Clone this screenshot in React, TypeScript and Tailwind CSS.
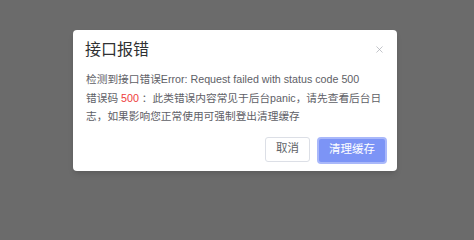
import { X } from "lucide-react";

const font = { fontFamily: '"Liberation Sans", "Noto Sans CJK SC", sans-serif' };

export default function App() {
  return (
    <div className="min-h-screen w-full bg-[#6b6b6b] pl-[73px] pt-[30px]" style={font}>
      {/* Dialog */}
      <div className="w-[324px] rounded-[4px] bg-white px-[13px] pb-[7px] shadow-md">
        {/* Header */}
        <div className="flex items-center justify-between pt-[10px]">
          <h2 className="-ml-[1px] text-[16px] leading-[19px] text-[#303133]">接口报错</h2>
          <button className="-mr-[1px] text-[#a8abb2]">
            <X className="h-[11px] w-[11px]" strokeWidth={1.5} />
          </button>
        </div>

        {/* Body */}
        <div className="mt-[11px] text-[10.7px] leading-[18.5px] text-[#5e6066]">
          <p>检测到接口错误Error: Request failed with status code 500</p>
          <p>
            错误码 <span className="text-[#ee3b3b]">500</span> ：此类错误内容常见于后台panic，请先查看后台日志，如果影响您正常使用可强制登出清理缓存
          </p>
        </div>

        {/* Footer */}
        <div className="-mr-[3px] mt-[11px] flex justify-end gap-[7px]">
          <button className="h-[25px] w-[45px] rounded-[3px] border border-[#dcdfe6] bg-white text-[11.5px] text-[#606266]">
            取消
          </button>
          <button className="h-[27px] w-[70px] rounded-[4px] border-2 border-[#a9b8fa] bg-[#7c94f6] text-[11.5px] text-white">
            清理缓存
          </button>
        </div>
      </div>
    </div>
  );
}
